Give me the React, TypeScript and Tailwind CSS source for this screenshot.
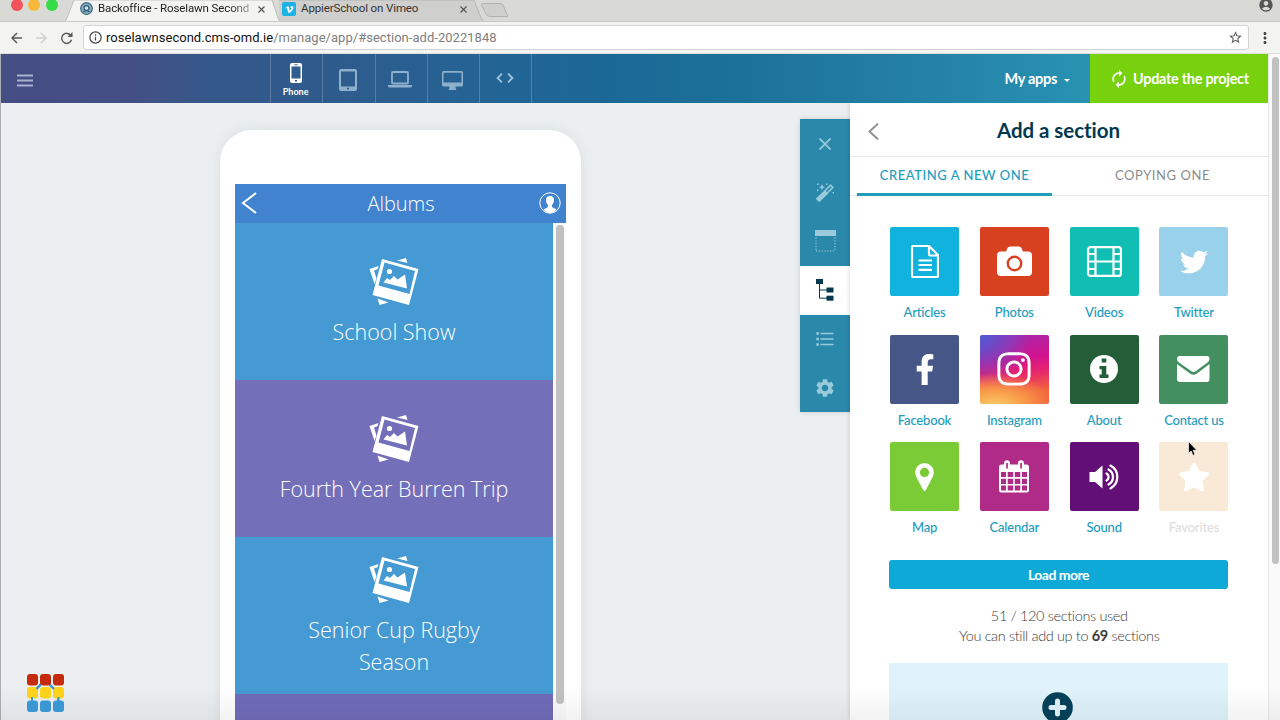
import type { ReactNode } from "react";
import { FaFacebookF, FaInstagram, FaStar, FaTwitter, FaVimeoV } from "react-icons/fa";
import { MdAccountCircle, MdAutorenew, MdMoreVert, MdSettings, MdStarBorder } from "react-icons/md";

/* ---------- Icons ---------- */

function PicturesIcon() {
  return (
    <svg width="50" height="48" viewBox="0 0 50 48" fill="#fff">
      <path d="M0.5 11 L9.500 8 L8.500 11.200 L5 12.500 L7.500 20.500 L5.500 26 Z" />
      <path d="M28 2.500 L37 0 L38.500 5 Z" />
      <path d="M8.500 40.500 L19.500 44.500 L10.500 47 Z" />
      <path
        fillRule="evenodd"
        d="M13 1 L49.5 11 L40 47 L3.5 37 Z M15.5 4.5 L9.5 27.5 L40.5 36 L46 13 Z"
      />
      <circle cx="20.500" cy="13.500" r="2.600" />
      <path d="M14.500 24.500 L18 20 L21 22 L25 18 L28.500 21.500 L36 16.500 L38 30.500 Z" />
    </svg>
  );
}

function ArticleIcon() {
  return (
    <svg width="28" height="33" viewBox="0 0 28 33" fill="none" stroke="#fff" strokeWidth="2.200">
      <path d="M1 2 Q1 1 2 1 H18 L27 10 V31 Q27 32 26 32 H2 Q1 32 1 31 Z M18 1 V9 Q18 10.500 19 10.500 H27" />
      <path d="M7.500 15.500 H21 M7.500 20 H21 M7.500 24.800 H21" />
    </svg>
  );
}

function CameraIcon() {
  return (
    <svg width="35" height="31" viewBox="0 0 35 31">
      <path
        fill="#fff"
        d="M4 5.500 H9 L10.500 2 Q11.200 0.500 13 0.500 H22 Q23.800 0.500 24.500 2 L26 5.500 H31 Q35 5.500 35 9.500 V26 Q35 30 31 30 H4 Q0 30 0 26 V9.500 Q0 5.500 4 5.500 Z"
      />
      <circle cx="17.500" cy="17.500" r="6.700" fill="#fff" stroke="#d8411f" strokeWidth="2.400" />
    </svg>
  );
}

function FilmIcon() {
  return (
    <svg width="35" height="31" viewBox="0 0 35 31" fill="none" stroke="#fff" strokeWidth="2.200">
      <rect x="1.100" y="1.100" width="32.800" height="28.800" rx="2.500" />
      <path d="M8.500 1 V30 M26.500 1 V30 M8.500 15.500 H26.500 M1 8 H8.500 M1 15.500 H8.500 M1 23 H8.500 M26.500 8 H34 M26.500 15.500 H34 M26.500 23 H34" />
    </svg>
  );
}

function InfoIcon() {
  return (
    <svg width="28" height="28" viewBox="0 0 28 28">
      <circle cx="14" cy="14" r="14" fill="#fff" />
      <path fill="#245e39" d="M11.700 3.500 H16.300 V7.600 H11.700 Z M9.500 11 H16.300 V19.500 H18.500 V23 H9.500 V19.500 H11.700 V14.300 H9.500 Z" />
    </svg>
  );
}

function EnvelopeIcon() {
  return (
    <svg width="33" height="26" viewBox="0 0 33 26" fill="#fff">
      <path d="M3 0 H30 Q32.500 0 32.500 3 Q32.500 5 30.500 6.500 L19 15 Q16.500 17 14 15 L2 6.500 Q0 5 0 3 Q0 0 3 0 Z" />
      <path d="M0 8 L13 17.500 Q16.500 20 20 17.500 L32.500 8 V23 Q32.500 26 30 26 H3 Q0 26 0 23 Z" />
    </svg>
  );
}

function PinIcon() {
  return (
    <svg width="19" height="28" viewBox="0 0 19 28">
      <path
        fill="#fff"
        fillRule="evenodd"
        d="M9.500 0 A9.300 9.300 0 0 1 18.800 9.300 Q18.800 11.500 18 13.200 L11 26.800 Q10.400 28 9.500 28 Q8.600 28 8 26.800 L1 13.200 Q0.200 11.500 0.200 9.300 A9.300 9.300 0 0 1 9.500 0 Z M9.500 4.800 A4.600 4.600 0 1 0 9.500 14 A4.600 4.600 0 1 0 9.500 4.800 Z"
      />
    </svg>
  );
}

function CalendarIcon() {
  return (
    <svg width="30" height="33" viewBox="0 0 30 33">
      <path
        fill="#fff"
        fillRule="evenodd"
        d="M2.500 4.500 H5 V3.500 Q5 0.300 8 0.300 Q11 0.300 11 3.500 V4.500 H19 V3.500 Q19 0.300 22 0.300 Q25 0.300 25 3.500 V4.500 H27.500 Q30 4.500 30 7 V30 Q30 32.500 27.500 32.500 H2.500 Q0 32.500 0 30 V7 Q0 4.500 2.500 4.500 Z M2 12 V17 H7 V12 Z M8.700 12 V17 H14.200 V12 Z M15.800 12 V17 H21.300 V12 Z M23 12 V17 H28 V12 Z M2 18.700 V24 H7 V18.700 Z M8.700 18.700 V24 H14.200 V18.700 Z M15.800 18.700 V24 H21.300 V18.700 Z M23 18.700 V24 H28 V18.700 Z M2 25.600 V30.500 H7 V25.600 Z M8.700 25.600 V30.500 H14.200 V25.600 Z M15.800 25.600 V30.500 H21.300 V25.600 Z M23 25.600 V30.500 H28 V25.600 Z M7.200 3 V8.500 H8.900 V3 Z M21.200 3 V8.500 H22.900 V3 Z"
      />
    </svg>
  );
}

function SoundIcon() {
  return (
    <svg width="31" height="26" viewBox="0 0 31 26">
      <path fill="#fff" d="M0.500 8 H6 L13.500 1.500 V24.500 L6 18 H0.500 Z" />
      <g fill="none" stroke="#fff" strokeWidth="2.300" strokeLinecap="round">
        <path d="M17.500 9.500 A4 4 0 0 1 17.500 16.500" />
        <path d="M19.500 5.500 A8.500 8.500 0 0 1 19.500 20.500" />
        <path d="M21.500 1.600 A13 13 0 0 1 21.500 24.400" />
      </g>
    </svg>
  );
}

function WandIcon() {
  return (
    <svg width="20" height="20" viewBox="0 0 20 20" fill="none">
      <path d="M2.500 17.500 L11.500 8.800" stroke="#9acbdd" strokeWidth="5" />
      <path d="M10 7.700 L15.500 2.200 L17.800 4.500 L12.300 10" stroke="#9acbdd" strokeWidth="1.600" />
      <path fill="#9acbdd" d="M7 1 L7.900 3.300 L10.200 4.200 L7.900 5.100 L7 7.400 L6.100 5.100 L3.800 4.200 L6.100 3.300 Z M2 0.500 h1.500 v1.500 h-1.500 Z M11 0.500 h1.500 v1.500 h-1.500 Z M2 6.500 h1.500 v1.500 h-1.500 Z M17.500 9 h1.500 v1.500 h-1.500 Z" />
    </svg>
  );
}

function LayoutIcon() {
  return (
    <svg width="21" height="22" viewBox="0 0 21 22" fill="none">
      <rect width="21" height="6" fill="#9acbdd" />
      <path d="M1 7.500 V21 M20 7.500 V21 M1 21 H20" stroke="#9acbdd" strokeWidth="1" strokeDasharray="1.300 1.500" />
    </svg>
  );
}

function TreeIcon() {
  return (
    <svg width="18" height="22" viewBox="0 0 18 22" fill="#03384f">
      <rect width="7" height="5" />
      <rect x="10.500" y="8.500" width="7" height="5" />
      <rect x="10.500" y="16.700" width="7" height="5" />
      <path d="M3.500 4 V19.200 H11 M3.500 11 H11" fill="none" stroke="#03384f" strokeWidth="1" />
    </svg>
  );
}

function ListIcon() {
  return (
    <svg width="18" height="14" viewBox="0 0 18 14" stroke="#9acbdd" strokeWidth="1.500">
      <path d="M4.500 1.500 H17.500 M4.500 7 H17.500 M4.500 12.500 H17.500" />
      <path d="M0.300 1.500 H2.900 M0.300 7 H2.900 M0.300 12.500 H2.900" strokeWidth="2.500" />
    </svg>
  );
}

/* ---------- Data ---------- */

type Section = { label: string; color: string; icon: ReactNode; disabled?: boolean };

const sections: Section[] = [
  { label: "Articles", color: "bg-[#12b2df]", icon: <ArticleIcon /> },
  { label: "Photos", color: "bg-[#d8411f]", icon: <CameraIcon /> },
  { label: "Videos", color: "bg-[#10beb4]", icon: <FilmIcon /> },
  { label: "Twitter", color: "bg-[#99d0ea]", icon: <FaTwitter className="w-7 h-7" /> },
  { label: "Facebook", color: "bg-[#465787]", icon: <FaFacebookF className="w-[30px] h-[31px]" /> },
  {
    label: "Instagram",
    color:
      "bg-[radial-gradient(ellipse_90%_50%_at_22%_105%,#f8d267_0%,#f99a4a_50%,transparent_100%),radial-gradient(circle_at_0%_0%,#4f5bd5_0%,transparent_52%),linear-gradient(172deg,#a827aa_5%,#d3138f_38%,#e6236e_55%,#f2643c_82%,#f0553f_100%)]",
    icon: <FaInstagram className="w-[38px] h-[38px]" />,
  },
  { label: "About", color: "bg-[#245e39]", icon: <InfoIcon /> },
  { label: "Contact us", color: "bg-[#448f60]", icon: <EnvelopeIcon /> },
  { label: "Map", color: "bg-[#7bcb36]", icon: <PinIcon /> },
  { label: "Calendar", color: "bg-[#b02b88]", icon: <CalendarIcon /> },
  { label: "Sound", color: "bg-[#621076]", icon: <SoundIcon /> },
  { label: "Favorites", color: "bg-[#f8ead7]", icon: <FaStar className="w-8 h-[30px]" />, disabled: true },
];

const albums = [
  { title: "School Show", color: "bg-[#459ad3]" },
  { title: "Fourth Year Burren Trip", color: "bg-[#746fb9]" },
  { title: "Senior Cup Rugby Season", color: "bg-[#459ad3]" },
];

/* ---------- Browser chrome ---------- */

function BrowserChrome() {
  return (
    <div className="shrink-0 font-[Roboto,sans-serif]">
      <div className="flex h-[22px] bg-[#d9d9d5] border-b border-[#c8c8c5] overflow-hidden">
        <div className="flex w-[64px] gap-[5.700px] pl-[10.500px]">
          <span className="w-[12px] h-[12px] rounded-full bg-[#f2535a] -mt-px" />
          <span className="w-[12px] h-[12px] rounded-full bg-[#f8b93b] -mt-px" />
          <span className="w-[12px] h-[12px] rounded-full bg-[#35dc46] -mt-px" />
        </div>
        <div className="relative w-[215px] h-[22px] z-10">
          <svg className="absolute inset-0" width="218" height="22">
            <path d="M0 22 Q2 21 3 18 L10 0 H208 L214 18 Q215 21 217 22 Z" fill="#f3f3f2" stroke="#b5b5b3" strokeWidth="0.800" />
          </svg>
          <div className="relative flex items-center h-[18px] pl-[16px]">
            <svg width="13" height="14" viewBox="0 0 13 14" className="mr-[5px]">
              <circle cx="6.500" cy="6.500" r="5.800" fill="#89a9b8" stroke="#386c8a" strokeWidth="1.200" />
              <circle cx="6.500" cy="6" r="2.400" fill="#d9e5ea" stroke="#2c5a79" strokeWidth="1.200" />
              <path d="M3.500 10 Q6.500 7.500 9.500 10" stroke="#2c5a79" strokeWidth="1.200" fill="none" />
            </svg>
            <span className="w-[156px] whitespace-nowrap text-[11.500px] tracking-[-0.120px] text-[#222] [mask-image:linear-gradient(90deg,#000_84%,rgba(0,0,0,0.250))]">
              Backoffice - Roselawn Second
            </span>
            <svg width="7" height="7" viewBox="0 0 7 7" className="ml-[4px]" stroke="#555" strokeWidth="1.200">
              <path d="M0.500 0.500 L6.500 6.500 M6.500 0.500 L0.500 6.500" />
            </svg>
          </div>
        </div>
        <div className="relative w-[199px] h-[22px]">
          <svg className="absolute inset-0" width="210" height="22">
            <path d="M-9 0 H195 L203 20 L205 22 H0 Z" fill="#cfcfcd" stroke="#b0b0ae" strokeWidth="0.800" />
          </svg>
          <div className="relative flex items-center h-[18px] pl-[2px]">
            <span className="flex items-center justify-center w-[14px] h-[14px] ml-px rounded-[2px] bg-[#1cb2e4] text-white mr-[5px]">
              <FaVimeoV className="w-[9px] h-[9px]" />
            </span>
            <span className="w-[159px] text-[11.500px] tracking-[-0.120px] text-[#333]">AppierSchool on Vimeo</span>
            <svg width="7" height="7" viewBox="0 0 7 7" stroke="#555" strokeWidth="1.200">
              <path d="M0.500 0.500 L6.500 6.500 M6.500 0.500 L0.500 6.500" />
            </svg>
          </div>
        </div>
        <svg width="32" height="20" className="ml-[2px]">
          <path d="M3 3.500 H20 Q22 3.500 23 5 L28 16.500 H10 Q7.500 16.500 6.500 14.500 L1.500 5 Q1 3.500 3 3.500 Z" fill="#cfcfcd" stroke="#aaa" strokeWidth="0.800" />
        </svg>
        <MdAccountCircle className="w-4 h-4 ml-auto mr-[6px] -mt-[3px] text-[#555]" />
      </div>
      <div className="flex items-center h-8 bg-[#f3f3f2] pl-[11px] border-b border-[#dededd]">
        <svg width="62" height="14" viewBox="0 0 62 14" fill="none" strokeWidth="1.500" className="mr-[10px]">
          <path d="M11 7 H1 M6 2 L1 7 L6 12" stroke="#5a5a5a" />
          <path d="M25 7 H35 M30 2 L35 7 L30 12" stroke="#d0d0d0" />
          <path d="M60 4.800 A5 5 0 1 0 60.500 8.800" stroke="#5a5a5a" />
          <path d="M61.500 1 V6 H56.500 Z" fill="#5a5a5a" />
        </svg>
        <div className="flex items-center w-[1166px] h-[25px] bg-white border border-[#d2d2d2] rounded-[3px] pl-[5px] pr-[5px]">
          <svg width="13" height="13" viewBox="0 0 13 13" fill="none" stroke="#444" strokeWidth="1.200" className="mr-[4px]">
            <circle cx="6.500" cy="6.500" r="5.600" />
            <path d="M6.500 5.800 V9.500 M6.500 3.300 V4.700" />
          </svg>
          <span className="grow text-[13px] tracking-[0.030px] text-[#808080]">
            <span className="text-[#111]">roselawnsecond.cms-omd.ie</span>/manage/app/#section-add-20221848
          </span>
          <MdStarBorder className="w-[15px] h-[15px] text-[#555]" />
        </div>
        <MdMoreVert className="w-[18px] h-[18px] ml-[7px] text-[#444]" />
      </div>
    </div>
  );
}

/* ---------- App header ---------- */

function DeviceButton({ children }: { children: ReactNode }) {
  return (
    <div className="flex flex-col items-center justify-center w-[52.300px] pr-[2px] border-l border-white/20 text-[#8fb0cb]">
      {children}
    </div>
  );
}

function Header() {
  return (
    <header className="flex shrink-0 h-[49px] text-white">
      <div className="flex grow bg-[linear-gradient(90deg,#454d83_0%,#434f84_12%,#36588a_19%,#2d5c8d_32%,#246495_44%,#1a6896_56%,#1b7299_68%,#2580a6_84%,#2892b1_100%)]">
        <div className="flex items-center w-[269px] pl-4">
          <svg width="16" height="13" stroke="#a7b2d0" strokeWidth="2" className="mt-[3px]">
            <path d="M0 1.500 H16 M0 6.500 H16 M0 11.500 H16" />
          </svg>
        </div>
        <DeviceButton>
          <svg width="12" height="20" viewBox="0 0 12 20" className="mt-[4px]">
            <rect width="12" height="20" rx="2" fill="#fff" />
            <rect x="1.500" y="3.500" width="9" height="12" fill="#2f5d8f" />
            <path d="M4.500 1.800 H7.500" stroke="#2f5d8f" />
            <rect x="5" y="17" width="2" height="1.500" fill="#2f5d8f" />
          </svg>
          <span className="text-[9px] leading-[12px] mt-[3px] font-bold text-white">Phone</span>
        </DeviceButton>
        <DeviceButton>
          <svg width="18" height="22" viewBox="0 0 18 22" className="mt-[3px]">
            <path fill="currentColor" fillRule="evenodd" d="M2 0 H16 Q18 0 18 2 V20 Q18 22 16 22 H2 Q0 22 0 20 V2 Q0 0 2 0 Z M2 2.500 V17.500 H16 V2.500 Z M8 18.800 V20.500 H10 V18.800 Z" />
          </svg>
        </DeviceButton>
        <DeviceButton>
          <svg width="24" height="17" viewBox="0 0 24 17" className="mt-[2px]">
            <rect x="4" y="1" width="16" height="11.500" rx="1" fill="none" stroke="currentColor" strokeWidth="1.800" />
            <path fill="currentColor" d="M0 14 H24 V15 Q24 16.500 22 16.500 H2 Q0 16.500 0 15 Z" />
          </svg>
        </DeviceButton>
        <DeviceButton>
          <svg width="21" height="19" viewBox="0 0 21 19" className="mt-[3px]">
            <path fill="currentColor" fillRule="evenodd" d="M1.500 0 H19.500 Q21 0 21 1.500 V14 Q21 15.500 19.500 15.500 H13.500 V17 L14.500 19 H6.500 L7.500 17 V15.500 H1.500 Q0 15.500 0 14 V1.500 Q0 0 1.500 0 Z M1.500 1.700 V11.500 H19.500 V1.700 Z" />
          </svg>
        </DeviceButton>
        <div className="flex items-center justify-center w-[53px] pr-px border-x border-white/20 text-[#a0c4d8]">
          <svg width="18" height="10" viewBox="0 0 18 10" fill="none" stroke="currentColor" strokeWidth="1.800" className="-mt-px">
            <path d="M6 0.700 L1.500 5 L6 9.300 M12 0.700 L16.500 5 L12 9.300" />
          </svg>
        </div>
        <div className="flex items-center ml-auto pt-px pr-[20px] text-[14.500px] font-bold tracking-[-0.300px]">
          My apps
          <span className="ml-[7px] mt-[3px] border-x-[3px] border-t-[3px] border-x-transparent border-t-white" />
        </div>
      </div>
      <div className="flex items-center w-[178px] pl-[19px] pt-px bg-[#77d10c] text-[14.500px] font-bold tracking-[-0.300px] whitespace-nowrap">
        <MdAutorenew className="w-5 h-5 mr-[4px] shrink-0" />
        Update the project
      </div>
    </header>
  );
}

/* ---------- Phone preview ---------- */

function PhonePreview() {
  return (
    <main className="flex flex-col w-[799px] shrink-0 bg-[#ebeff1] pl-[219px] pt-[26.500px]">
      <div className="w-[361px] h-[620px] shrink-0 rounded-t-[32px] bg-white px-[15px] pt-[54px] shadow-[0_0_14px_rgba(120,130,120,0.140)]">
        <div className="w-[331px] font-['Open_Sans',sans-serif] font-light text-white">
          <div className="flex items-center h-[39px] bg-[#4283cf] px-[6px]">
            <svg width="17" height="22" viewBox="0 0 17 22" fill="none" stroke="#fff" strokeWidth="2">
              <path d="M15 1 L2 11 L15 21" />
            </svg>
            <span className="grow text-center text-[20px] pl-[5px] pt-[2px]">Albums</span>
            <svg width="22" height="22" viewBox="0 0 22 22" className="-mr-px">
              <circle cx="11" cy="11" r="10.200" fill="none" stroke="#fff" strokeWidth="1" />
              <path fill="#fff" d="M11 4 Q15 4 15 8 Q15 11.500 13 13 V15 L17.500 17.500 Q14.500 21 11 21 Q7.500 21 4.500 17.500 L9 15 V13 Q7 11.500 7 8 Q7 4 11 4 Z" />
            </svg>
          </div>
          <div className="flex">
            <div className="w-[318px]">
              {albums.map((album) => (
                <div key={album.title} className={`flex flex-col items-center justify-center h-[157px] pt-[3px] ${album.color}`}>
                  <PicturesIcon />
                  <p className="w-[240px] mt-[10px] text-center text-[21.500px] leading-8">{album.title}</p>
                </div>
              ))}
              <div className="h-[60px] bg-[#706bb8]" />
            </div>
            <div className="w-[13px] pt-[2.500px] pl-[3px] bg-[#fafafa]">
              <div className="w-2 h-[479px] rounded-full bg-[#c1c1c1]" />
            </div>
          </div>
        </div>
      </div>
    </main>
  );
}

/* ---------- Right side ---------- */

function RailItem({ active, children }: { active?: boolean; children: ReactNode }) {
  return (
    <div className={`flex items-center justify-center h-[48.800px] text-[#9acbdd] ${active ? "bg-white" : "bg-[#2a88aa]"}`}>
      {children}
    </div>
  );
}

function ToolRail() {
  return (
    <div className="w-[50px] shrink-0 bg-[#ebeff1] pt-[16.400px]">
      <div className="shadow-[0_0_5px_rgba(0,0,0,0.150)]">
        <RailItem>
          <svg width="12" height="12" viewBox="0 0 12 12" stroke="currentColor" strokeWidth="1.700">
            <path d="M0.500 0.500 L11.500 11.500 M11.500 0.500 L0.500 11.500" />
          </svg>
        </RailItem>
        <RailItem>
          <WandIcon />
        </RailItem>
        <RailItem>
          <LayoutIcon />
        </RailItem>
        <RailItem active>
          <TreeIcon />
        </RailItem>
        <RailItem>
          <ListIcon />
        </RailItem>
        <RailItem>
          <MdSettings className="w-[22px] h-[22px] mt-px" />
        </RailItem>
      </div>
    </div>
  );
}

function SectionTile({ section }: { section: Section }) {
  return (
    <div className="flex flex-col items-center h-[107.600px] w-[69px]">
      <div className={`flex items-center justify-center w-full h-[69px] rounded-[2px] text-white ${section.color}`}>
        {section.icon}
      </div>
      <span className={`mt-[7px] text-[13px] leading-[18px] tracking-[-0.180px] whitespace-nowrap font-medium ${section.disabled ? "text-[#dedede]" : "text-[#209cbd]"}`}>
        {section.label}
      </span>
    </div>
  );
}

function SectionPanel() {
  return (
    <aside className="w-[418px] shrink-0 bg-white shadow-[-1px_0_4px_rgba(0,0,0,0.120)] overflow-hidden">
      <div className="flex items-center h-[54px] px-[18px] border-b border-[#e8e8e8]">
        <svg width="11" height="17" viewBox="0 0 11 17" fill="none" stroke="#929292" strokeWidth="2" className="mt-[3px]">
          <path d="M10 0.700 L1.500 8.500 L10 16.300" />
        </svg>
        <h1 className="grow text-center pt-px pr-[12px] text-[20.500px] tracking-[-0.050px] font-bold text-[#03384f]">Add a section</h1>
      </div>
      <div className="flex h-[39px] border-b border-[#e8e8e8] px-[7px] text-[13px] tracking-[0.550px]">
        <div className="flex items-center justify-center w-[195px] h-[39px] pt-px border-b-[3px] border-[#209cbd] font-medium text-[#209cbd]">
          CREATING A NEW ONE
        </div>
        <div className="flex items-center justify-center grow pb-px pl-[12px] text-[#8c8c8c]">COPYING ONE</div>
      </div>
      <div className="pl-[40px] pt-[31px] w-[378.500px]">
        <div className="flex flex-wrap justify-between">
          {sections.map((section) => (
            <SectionTile key={section.label} section={section} />
          ))}
        </div>
        <button className="block w-[339px] -ml-px mt-[10px] h-[29px] rounded-[3px] bg-[#0fa9d8] text-white text-[14px] font-bold tracking-[-0.500px]">
          Load more
        </button>
        <div className="mt-[17.500px] text-center text-[14.500px] leading-[20px] font-light text-[#3c3c3c] tracking-[-0.360px]">
          <p>51 / 120 sections used</p>
          <p>
            You can still add up to <b className="font-bold">69</b> sections
          </p>
        </div>
        <div className="flex justify-center w-[339px] -ml-px mt-[17px] h-20 pt-[29px] pr-[3px] bg-[#e0f3fa]">
          <svg width="31" height="31" viewBox="0 0 31 31">
            <circle cx="15.500" cy="15.500" r="15.300" fill="#04425a" />
            <path d="M15.500 9 V22 M9 15.500 H22" stroke="#e0f3fa" strokeWidth="5" strokeLinecap="round" />
          </svg>
        </div>
      </div>
    </aside>
  );
}

function OrgLogo() {
  return (
    <svg width="39" height="40" viewBox="0 0 39 40" className="absolute left-[26px] top-[673px]">
      <path d="M6 32 V20 L19 7 L32 20 V32" fill="none" stroke="#3b97d3" strokeWidth="2" />
      {[1, 14, 27].map((x) => (
        <g key={x}>
          <rect x={x} y="1" width="11" height="11.500" rx="3" fill="#c62a0c" />
          <rect x={x} y="14" width="11" height="11.500" rx="3" fill="#fdd21a" />
          <rect x={x} y="27.500" width="11" height="11.500" rx="3" fill="#3b97d3" />
        </g>
      ))}
      <path d="M10.500 16 L14.500 12 M28 16 L24 12 M6 24 V29 M32.500 24 V29" stroke="#3b97d3" strokeWidth="2" />
    </svg>
  );
}

export default function App() {
  return (
    <div className="relative flex flex-col w-[1280px] h-[720px] overflow-hidden bg-white font-[Lato,sans-serif]">
      <BrowserChrome />
      <div className="flex grow min-h-0 border-l border-[#a9afb5]">
        <div className="flex flex-col w-[1267px] shrink-0">
          <Header />
          <div className="flex grow min-h-0 overflow-hidden">
            <PhonePreview />
            <ToolRail />
            <SectionPanel />
          </div>
        </div>
        <div className="w-[12px] pt-[3px] pl-[3px] bg-[#fafafa] border-l border-[#e8e8e8]">
          <div className="w-[7px] h-[507px] rounded-full bg-[#c1c1c1]" />
        </div>
      </div>
      <div className="absolute inset-x-0 bottom-0 h-[34px] bg-linear-to-b from-transparent to-black/5" />
      <OrgLogo />
      {/* Mouse pointer */}
      <svg width="10" height="16" viewBox="0 0 10 16" className="absolute left-[1188px] top-[441px]">
        <path d="M0.500 0.500 V12.500 L3.200 10 L5 14.500 L7 13.600 L5.200 9.300 H8.800 Z" fill="#000" stroke="#fff" strokeWidth="0.700" />
      </svg>
    </div>
  );
}
